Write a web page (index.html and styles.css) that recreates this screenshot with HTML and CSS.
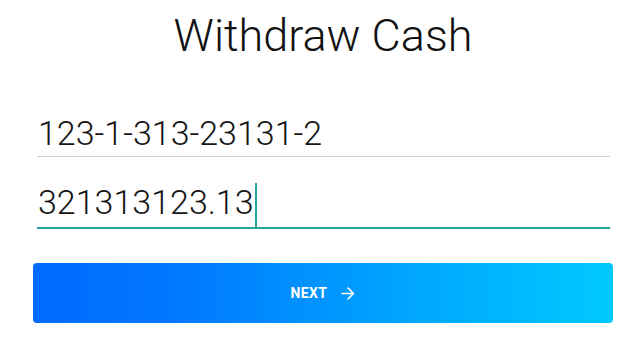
FILE: index.html
```html
<!DOCTYPE html>
<html lang="en">
<head>
<meta charset="utf-8">
<title>Withdraw Cash</title>
<link rel="stylesheet" href="styles.css">
</head>
<body>
<main class="page">
  <h1 class="title">Withdraw Cash</h1>
  <div class="field">
    <span class="value">123-1-313-23131-2</span>
  </div>
  <div class="field focused">
    <span class="value">321313123.13</span><span class="caret"></span>
  </div>
  <button class="next" type="button">
    <span class="label">NEXT</span>
    <svg class="arrow" width="14" height="13" viewBox="0 0 14 13" aria-hidden="true">
      <path d="M1 6.5H12.5M7 1L12.5 6.5L7 12" fill="none" stroke="#fff" stroke-width="1.6" stroke-linecap="round" stroke-linejoin="round"/>
    </svg>
  </button>
</main>
</body>
</html>
```

FILE: styles.css
```css
html, body {
  margin: 0;
  padding: 0;
  background: #ffffff;
}

body {
  font-family: Roboto, "Liberation Sans", Arial, sans-serif;
  color: #212121;
}

.page {
  display: flex;
  flex-direction: column;
  width: 580px;
  margin-left: 33px;
}

.title {
  margin: 0;
  padding-top: 8px;
  font-size: 45px;
  font-weight: 300;
  line-height: 56px;
  text-align: center;
  color: #111111;
}

.field {
  margin: 49px 3px 0 4px;
  padding-bottom: 3px;
  border-bottom: 1px solid #cfcfcf;
  font-size: 34px;
  font-weight: 300;
  line-height: 40px;
  color: #151515;
  white-space: nowrap;
}

.field.focused {
  margin-top: 25px;
  padding-bottom: 3px;
  border-bottom: 2px solid #26a69a;
}

.value {
  padding-left: 1px;
}

.caret {
  display: inline-block;
  width: 2px;
  height: 44px;
  margin-top: -4px;
  margin-bottom: -3px;
  margin-left: 1px;
  vertical-align: -10px;
  background: #26a69a;
}

.next {
  margin-top: 34px;
  height: 60px;
  border: none;
  border-radius: 4px;
  background: linear-gradient(to right, #006aff 0%, #0078ff 25%, #00a6ff 65%, #00c9ff 100%);
  color: #ffffff;
  display: flex;
  align-items: center;
  justify-content: center;
  gap: 14px;
  font-family: Roboto, "Liberation Sans", Arial, sans-serif;
  font-size: 14px;
  font-weight: 700;
  letter-spacing: 0.4px;
  cursor: pointer;
}

.label {
  line-height: 16px;
}

.arrow {
  display: block;
}
```
